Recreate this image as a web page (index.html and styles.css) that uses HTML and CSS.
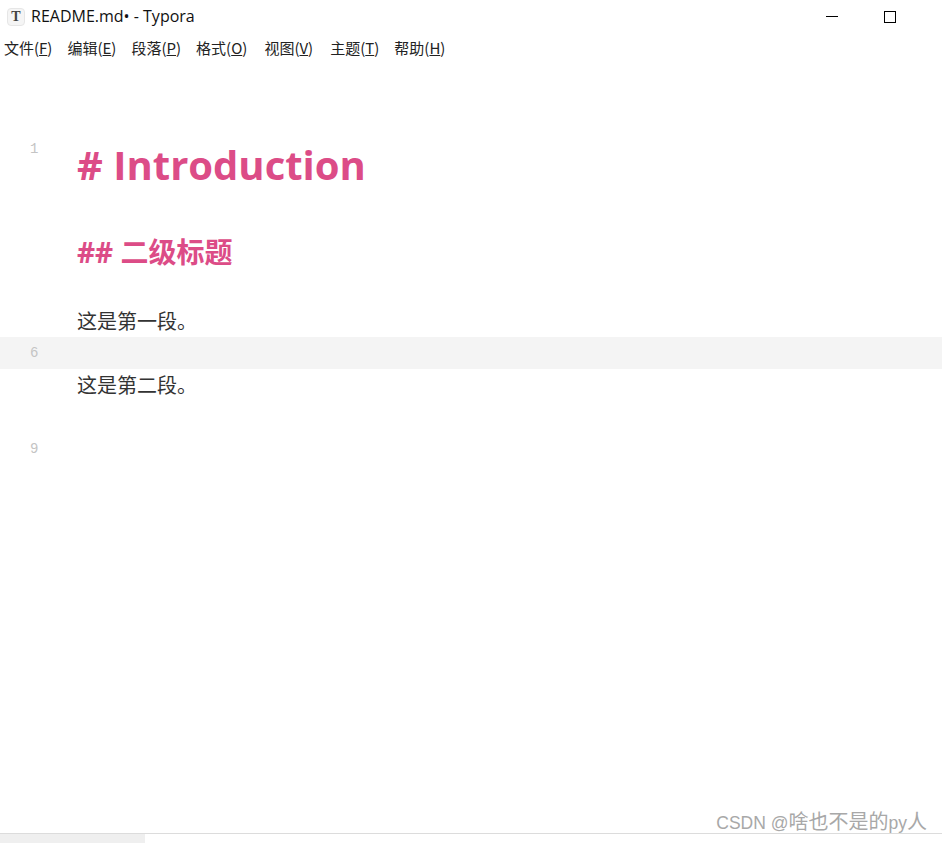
FILE: index.html

```html
<!DOCTYPE html>
<html lang="zh-CN">
<head>
    <meta charset="UTF-8">
    <title>README.md• - Typora</title>
    <link rel="stylesheet" href="styles.css">
</head>
<body>
    <div class="window">
        <header class="titlebar">
            <div class="app-icon">T</div>
            <div class="title">README.md• - Typora</div>
            <div class="controls">
                <svg class="ctl-min" width="12" height="12" viewBox="0 0 12 12"><rect x="0" y="5" width="12" height="1" fill="#000"/></svg>
                <svg class="ctl-max" width="12" height="12" viewBox="0 0 12 12"><rect x="0.5" y="0.5" width="11" height="11" fill="none" stroke="#000"/></svg>
            </div>
        </header>
        <nav class="menubar">
            <span class="menu">文件(<u>F</u>)</span>
            <span class="menu">编辑(<u>E</u>)</span>
            <span class="menu">段落(<u>P</u>)</span>
            <span class="menu menu-wide">格式(<u>O</u>)</span>
            <span class="menu menu-wide">视图(<u>V</u>)</span>
            <span class="menu">主题(<u>T</u>)</span>
            <span class="menu">帮助(<u>H</u>)</span>
        </nav>
        <main class="editor">
            <div class="line line-h1"><span class="num">1</span><h1># Introduction</h1></div>
            <div class="line line-h2"><span class="num"></span><h2>## 二级标题</h2></div>
            <div class="line line-p"><span class="num"></span><p>这是第一段。</p></div>
            <div class="line line-empty active"><span class="num">6</span></div>
            <div class="line line-p"><span class="num"></span><p>这是第二段。</p></div>
            <div class="line line-last"><span class="num">9</span></div>
        </main>
        <div class="scrollbar"><div class="thumb"></div></div>
    </div>
    <div class="watermark">CSDN @<span class="wm-cjk">啥也不是的</span>py<span class="wm-cjk">人</span></div>
</body>
</html>
```

FILE: styles.css

```css
* {
    box-sizing: border-box;
}

html, body {
    margin: 0;
    height: 100%;
    background: #fff;
    overflow: hidden;
}

body {
    font-family: "Liberation Sans", "Noto Sans CJK SC", sans-serif;
    color: #000;
}

.window {
    height: 843px;
    display: flex;
    flex-direction: column;
}

.titlebar {
    height: 33px;
    flex: none;
    display: flex;
    align-items: center;
    padding-left: 7px;
}

.app-icon {
    width: 18px;
    height: 18px;
    border: 1px solid #e6e6e6;
    border-radius: 4px;
    background: #f5f5f5;
    color: #444;
    font-family: "Liberation Serif", serif;
    font-weight: bold;
    font-size: 14px;
    line-height: 16px;
    text-align: center;
}

.title {
    margin-left: 6px;
    margin-bottom: 1px;
    font-family: "Open Sans", "Noto Sans", sans-serif;
    font-size: 16px;
    color: #111;
}

.controls {
    margin-left: auto;
    display: flex;
    align-items: center;
    gap: 46px;
    padding-right: 46px;
}

.menubar {
    height: 31px;
    flex: none;
    display: flex;
    align-items: center;
    gap: 15px;
    padding-left: 4px;
    padding-bottom: 2px;
    font-size: 15px;
    font-family: "Noto Sans CJK SC", sans-serif;
    color: #222;
}

.menu-wide {
    padding-right: 2px;
}

.editor {
    flex: 1;
    padding-top: 68px;
}

.line {
    display: flex;
}

.num {
    width: 77px;
    flex: none;
    padding-left: 30px;
    font-family: "Liberation Mono", monospace;
    font-size: 14px;
    color: #c4c4c4;
}

.line-h1 {
    height: 68px;
    padding-top: 3px;
}

.line-h1 .num {
    padding-top: 6px;
}

.line-h2 {
    height: 105px;
}

.line-p {
    height: 32px;
    align-items: center;
}

h1, h2, p {
    margin: 0;
}

h1 {
    color: #dc4c87;
    font-family: "Open Sans", "Noto Sans CJK SC", sans-serif;
    font-size: 40px;
    line-height: 60px;
    font-weight: 700;
}

h2 {
    color: #dc4c87;
    font-family: "Open Sans", "Noto Sans CJK SC", sans-serif;
    font-size: 28px;
    line-height: 36px;
    font-weight: 700;
    margin-top: 34px;
}

p {
    font-family: "Noto Sans CJK SC", sans-serif;
    font-size: 20px;
    color: #333;
    margin-bottom: 2px;
}

.line-empty {
    height: 32px;
    align-items: center;
}

.active {
    background: #f4f4f4;
}

.line-last {
    height: 32px;
    margin-top: 32px;
    align-items: center;
}

.scrollbar {
    height: 10px;
    flex: none;
    border-top: 1px solid #dcdcdc;
}

.thumb {
    width: 145px;
    height: 9px;
    background: #efefef;
}

.watermark {
    position: absolute;
    right: 15px;
    bottom: 8px;
    font-family: "Liberation Sans", "Noto Sans CJK SC", sans-serif;
    font-size: 17.5px;
    color: #a8a8a8;
}

.wm-cjk {
    font-size: 20px;
}
```
